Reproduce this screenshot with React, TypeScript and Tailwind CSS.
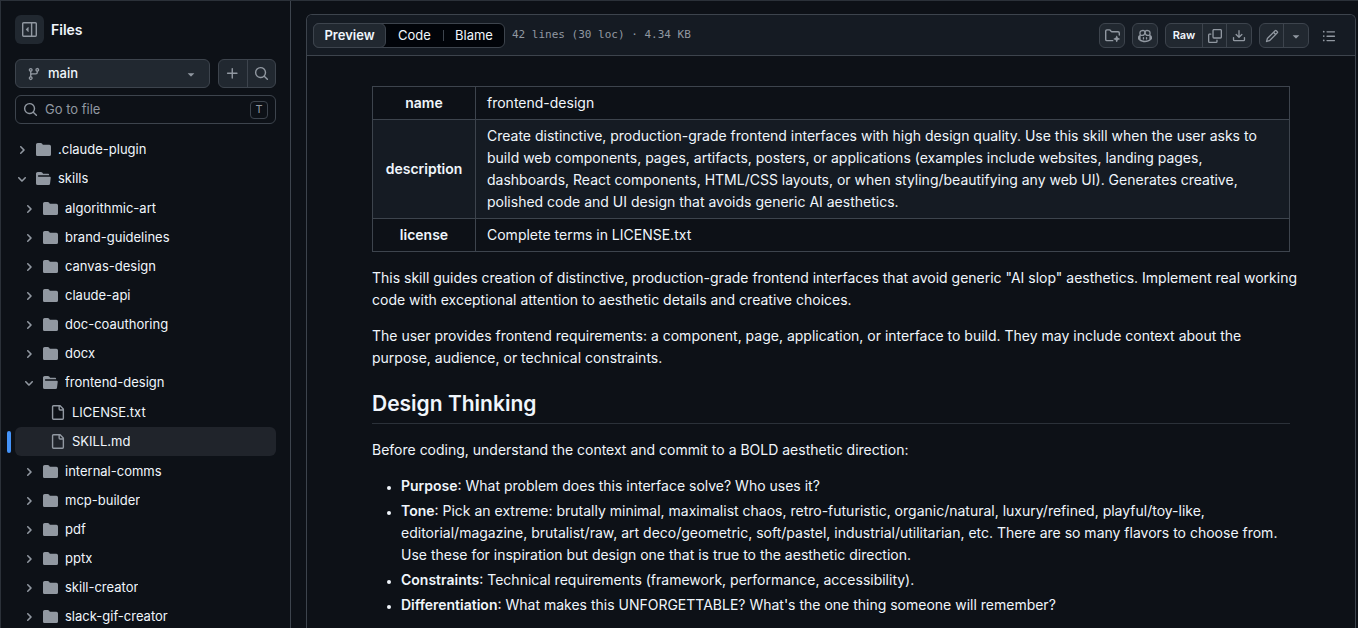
import type { ReactNode } from "react";

const ICONS = {
  chevronRight: [
    "M4.7 10c-.2 0-.4-.1-.5-.2-.3-.3-.3-.8 0-1.1L6.9 6 4.2 3.3c-.3-.3-.3-.8 0-1.1.3-.3.8-.3 1.1 0l3.3 3.2c.3.3.3.8 0 1.1L5.3 9.7c-.2.2-.4.3-.6.3Z",
  ],
  chevronDown: [
    "M6 8.825c-.2 0-.4-.1-.5-.2l-3.3-3.3c-.3-.3-.3-.8 0-1.1.3-.3.8-.3 1.1 0l2.7 2.7 2.7-2.7c.3-.3.8-.3 1.1 0 .3.3.3.8 0 1.1l-3.2 3.2c-.2.2-.4.3-.6.3Z",
  ],
  folder: [
    "M1.75 1A1.75 1.75 0 0 0 0 2.75v10.5C0 14.216.784 15 1.75 15h12.5A1.75 1.75 0 0 0 16 13.25v-8.5A1.75 1.75 0 0 0 14.25 3H7.5a.25.25 0 0 1-.2-.1l-.9-1.2C6.07 1.26 5.55 1 5 1H1.75Z",
  ],
  folderOpen: [
    "M.513 1.513A1.75 1.75 0 0 1 1.75 1h3.5c.55 0 1.07.26 1.4.7l.9 1.2a.25.25 0 0 0 .2.1H13a1 1 0 0 1 1 1v.5H2.75a.75.75 0 0 0 0 1.5h11.978a1 1 0 0 1 .994 1.117L15 13.25A1.75 1.75 0 0 1 13.25 15H1.75A1.75 1.75 0 0 1 0 13.25V2.75c0-.464.184-.91.513-1.237Z",
  ],
  file: [
    "M2 1.75C2 .784 2.784 0 3.75 0h6.586c.464 0 .909.184 1.237.513l2.914 2.914c.329.328.513.773.513 1.237v9.586A1.75 1.75 0 0 1 13.25 16h-9.5A1.75 1.75 0 0 1 2 14.25Zm1.75-.25a.25.25 0 0 0-.25.25v12.5c0 .138.112.25.25.25h9.5a.25.25 0 0 0 .25-.25V6h-2.75A1.75 1.75 0 0 1 9 4.25V1.5Zm6.75.062V4.25c0 .138.112.25.25.25h2.688l-.011-.013-2.914-2.914-.013-.011Z",
  ],
  search: [
    "M10.68 11.74a6 6 0 0 1-7.922-8.982 6 6 0 0 1 8.982 7.922l3.04 3.04a.749.749 0 0 1-.326 1.275.749.749 0 0 1-.734-.215ZM11.5 7a4.499 4.499 0 1 0-8.997 0A4.499 4.499 0 0 0 11.5 7Z",
  ],
  branch: [
    "M9.5 3.25a2.25 2.25 0 1 1 3 2.122V6A2.5 2.5 0 0 1 10 8.5H6a1 1 0 0 0-1 1v1.128a2.251 2.251 0 1 1-1.5 0V5.372a2.25 2.25 0 1 1 1.5 0v1.836A2.493 2.493 0 0 1 6 7h4a1 1 0 0 0 1-1v-.628A2.25 2.25 0 0 1 9.5 3.25Zm-6 0a.75.75 0 1 0 1.5 0 .75.75 0 0 0-1.5 0Zm8.25-.75a.75.75 0 1 0 0 1.5.75.75 0 0 0 0-1.5ZM4.25 12a.75.75 0 1 0 0 1.5.75.75 0 0 0 0-1.5Z",
  ],
  plus: [
    "M7.75 2a.75.75 0 0 1 .75.75V7h4.25a.75.75 0 0 1 0 1.5H8.5v4.25a.75.75 0 0 1-1.5 0V8.5H2.75a.75.75 0 0 1 0-1.5H7V2.75A.75.75 0 0 1 7.75 2Z",
  ],
  triangle: [
    "m4.427 7.427 3.396 3.396a.25.25 0 0 0 .354 0l3.396-3.396A.25.25 0 0 0 11.396 7H4.604a.25.25 0 0 0-.177.427Z",
  ],
  sidebar: [
    "m4.177 7.823 2.396-2.396A.25.25 0 0 1 7 5.604v4.792a.25.25 0 0 1-.427.177L4.177 8.177a.25.25 0 0 1 0-.354Z",
    "M0 1.75C0 .784.784 0 1.75 0h12.5C15.216 0 16 .784 16 1.75v12.5A1.75 1.75 0 0 1 14.25 16H1.75A1.75 1.75 0 0 1 0 14.25Zm1.75-.25a.25.25 0 0 0-.25.25v12.5c0 .138.112.25.25.25H9.5v-13Zm12.5 13a.25.25 0 0 0 .25-.25V1.75a.25.25 0 0 0-.25-.25H11v13Z",
  ],
  copy: [
    "M0 6.75C0 5.784.784 5 1.75 5h1.5a.75.75 0 0 1 0 1.5h-1.5a.25.25 0 0 0-.25.25v7.5c0 .138.112.25.25.25h7.5a.25.25 0 0 0 .25-.25v-1.5a.75.75 0 0 1 1.5 0v1.5A1.75 1.75 0 0 1 9.25 16h-7.5A1.75 1.75 0 0 1 0 14.25Z",
    "M5 1.75C5 .784 5.784 0 6.75 0h7.5C15.216 0 16 .784 16 1.75v7.5A1.75 1.75 0 0 1 14.25 11h-7.5A1.75 1.75 0 0 1 5 9.25Zm1.75-.25a.25.25 0 0 0-.25.25v7.5c0 .138.112.25.25.25h7.5a.25.25 0 0 0 .25-.25v-7.5a.25.25 0 0 0-.25-.25Z",
  ],
  download: [
    "M2.75 14A1.75 1.75 0 0 1 1 12.25v-2.5a.75.75 0 0 1 1.5 0v2.5c0 .138.112.25.25.25h10.5a.25.25 0 0 0 .25-.25v-2.5a.75.75 0 0 1 1.5 0v2.5A1.75 1.75 0 0 1 13.25 14Z",
    "M7.25 7.689V2a.75.75 0 0 1 1.5 0v5.689l1.97-1.969a.749.749 0 1 1 1.06 1.06l-3.25 3.25a.749.749 0 0 1-1.06 0L4.22 6.78a.749.749 0 1 1 1.06-1.06l1.97 1.969Z",
  ],
  pencil: [
    "M11.013 1.427a1.75 1.75 0 0 1 2.474 0l1.086 1.086a1.75 1.75 0 0 1 0 2.474l-8.61 8.61c-.21.21-.47.364-.756.445l-3.251.93a.75.75 0 0 1-.927-.928l.929-3.25c.081-.286.235-.547.445-.758l8.61-8.61Zm.176 4.823L9.75 4.81l-6.286 6.287a.253.253 0 0 0-.064.108l-.558 1.953 1.953-.558a.253.253 0 0 0 .108-.064Zm1.238-3.763a.25.25 0 0 0-.354 0L10.811 3.75l1.439 1.44 1.263-1.263a.25.25 0 0 0 0-.354Z",
  ],
  list: [
    "M5.75 2.5h8.5a.75.75 0 0 1 0 1.5h-8.5a.75.75 0 0 1 0-1.5Zm0 5h8.5a.75.75 0 0 1 0 1.5h-8.5a.75.75 0 0 1 0-1.5Zm0 5h8.5a.75.75 0 0 1 0 1.5h-8.5a.75.75 0 0 1 0-1.5ZM2 14a1 1 0 1 1 0-2 1 1 0 0 1 0 2Zm1-6a1 1 0 1 1-2 0 1 1 0 0 1 2 0ZM2 4a1 1 0 1 1 0-2 1 1 0 0 1 0 2Z",
  ],
  copilot: [
    "M7.998 15.035c-4.562 0-7.873-2.914-7.998-3.749V9.338c.085-.628.677-1.686 1.588-2.065.013-.07.024-.143.036-.218.029-.183.06-.384.126-.612-.201-.508-.254-1.084-.254-1.656 0-.87.128-1.769.693-2.484.579-.733 1.494-1.124 2.724-1.261 1.206-.134 2.262.034 2.944.765.05.053.096.108.139.165.044-.057.094-.112.143-.165.682-.731 1.738-.899 2.944-.765 1.23.137 2.145.528 2.724 1.261.566.715.693 1.614.693 2.484 0 .572-.053 1.148-.254 1.656.066.228.098.429.126.612.012.076.024.148.037.218.924.385 1.522 1.471 1.591 2.095v1.872c0 .766-3.351 3.795-8.002 3.795Zm0-1.485c2.28 0 4.584-1.11 5.002-1.433V7.862l-.023-.116c-.49.21-1.075.291-1.727.291-1.146 0-2.059-.327-2.71-.991A3.222 3.222 0 0 1 8 6.303a3.24 3.24 0 0 1-.544.743c-.65.664-1.563.991-2.71.991-.652 0-1.236-.081-1.727-.291l-.023.116v4.255c.419.323 2.722 1.433 5.002 1.433ZM6.762 2.83c-.193-.206-.637-.413-1.682-.297-1.019.113-1.479.404-1.713.7-.247.312-.369.789-.369 1.554 0 .793.129 1.171.308 1.371.162.181.519.379 1.442.379.853 0 1.339-.235 1.638-.54.315-.322.527-.827.617-1.553.117-.935-.037-1.395-.241-1.614Zm4.155-.297c-1.044-.116-1.488.091-1.681.297-.204.219-.359.679-.242 1.614.091.726.303 1.231.618 1.553.299.305.784.54 1.638.54.922 0 1.28-.198 1.442-.379.179-.2.308-.578.308-1.371 0-.765-.123-1.242-.37-1.554-.233-.296-.693-.587-1.713-.7Z",
    "M6.25 9.037a.75.75 0 0 1 .75.75v1.501a.75.75 0 0 1-1.5 0V9.787a.75.75 0 0 1 .75-.75Zm4.25.75v1.501a.75.75 0 0 1-1.5 0V9.787a.75.75 0 0 1 1.5 0Z",
  ],
};

type IconName = keyof typeof ICONS;

function Icon({ name, className = "size-3.5" }: { name: IconName; className?: string }) {
  const box = name === "chevronRight" || name === "chevronDown" ? "0 0 12 12" : "0 0 16 16";
  return (
    <svg viewBox={box} fill="currentColor" aria-hidden="true" className={`shrink-0 ${className}`}>
      {ICONS[name].map((d) => (
        <path key={d} d={d} />
      ))}
    </svg>
  );
}

function FolderSparkleIcon() {
  return (
    <svg viewBox="0 0 16 16" aria-hidden="true" className="size-[15px] shrink-0">
      <path
        d="M8.250 13.500H2a1.250 1.250 0 0 1-1.250-1.250v-9A1.250 1.250 0 0 1 2 2h2.800a1 1 0 0 1 .8.4l.9 1.2a1 1 0 0 0 .8.4H14a1.250 1.250 0 0 1 1.250 1.250V7.500"
        fill="none"
        stroke="currentColor"
        strokeWidth="1.500"
        strokeLinecap="round"
      />
      <path
        d="M12.500 8.300c.25 0 .45.150.53.390l.4 1.170c.14.400.45.710.85.850l1.170.4c.52.180.52.880 0 1.060l-1.170.4c-.4.140-.71.450-.85.850l-.4 1.170c-.18.520-.88.520-1.060 0l-.4-1.170a1.350 1.350 0 0 0-.85-.85l-1.170-.4c-.52-.18-.52-.88 0-1.060l1.170-.4c.4-.14.71-.45.85-.85l.4-1.170c.08-.24.28-.39.53-.39Z"
        fill="currentColor"
      />
    </svg>
  );
}

type Node = { name: string; kind: "folder" | "file"; selected?: boolean; children?: Node[] };

const folder = (name: string, children?: Node[]): Node => ({ name, kind: "folder", children });

const TREE: Node[] = [
  folder(".claude-plugin"),
  folder("skills", [
    folder("algorithmic-art"),
    folder("brand-guidelines"),
    folder("canvas-design"),
    folder("claude-api"),
    folder("doc-coauthoring"),
    folder("docx"),
    folder("frontend-design", [
      { name: "LICENSE.txt", kind: "file" },
      { name: "SKILL.md", kind: "file", selected: true },
    ]),
    folder("internal-comms"),
    folder("mcp-builder"),
    folder("pdf"),
    folder("pptx"),
    folder("skill-creator"),
    folder("slack-gif-creator"),
  ]),
];

const INDENT = ["pl-0", "pl-[7px]", "pl-3.5"];
const GROUP_SPACE = ["", "pt-px", "py-px"];

function Tree({ nodes, level = 0 }: { nodes: Node[]; level?: number }) {
  return (
    <ul className={GROUP_SPACE[level]}>
      {nodes.map((node) => (
        <li key={node.name}>
          <div className="relative">
            {node.selected && (
              <span className="absolute top-1 -left-2 h-[22px] w-1 rounded-full bg-[#4493f8]" />
            )}
            <button
              type="button"
              className={`flex h-[29px] w-full items-center rounded-md text-left ${INDENT[level]} ${
                node.selected ? "bg-[#20242b]" : ""
              }`}
            >
              <span className="flex w-[21px] shrink-0 items-center pl-px text-[#9198a1]">
                {node.kind === "folder" && (
                  <Icon name={node.children ? "chevronDown" : "chevronRight"} className="size-3" />
                )}
              </span>
              <span className="flex w-[22px] shrink-0 text-[#9198a1]">
                {node.kind === "file" ? (
                  <Icon name="file" className="size-[15px]" />
                ) : (
                  <Icon name={node.children ? "folderOpen" : "folder"} className="size-[15px]" />
                )}
              </span>
              <span className="truncate">{node.name}</span>
            </button>
          </div>
          {node.children && <Tree nodes={node.children} level={level + 1} />}
        </li>
      ))}
    </ul>
  );
}

function Sidebar() {
  return (
    <aside className="w-[290px] shrink-0 overflow-hidden border-r border-[#3d444d] px-3.5 pt-3.5 text-[13px]">
      <div className="flex items-center gap-[7px]">
        <button
          type="button"
          aria-label="Collapse file tree"
          className="flex size-[29px] items-center justify-center rounded-md bg-[#212830] text-[#9198a1]"
        >
          <Icon name="sidebar" className="size-[15px]" />
        </button>
        <h2 className="text-sm font-semibold">Files</h2>
      </div>

      <div className="mt-[15px] flex gap-2">
        <button
          type="button"
          className="flex h-[29px] flex-1 items-center rounded-md border border-[#3d444d] bg-[#212830] px-[11px] font-medium"
        >
          <Icon name="branch" className="mr-[7px] size-3.5 text-[#9198a1]" />
          main
          <Icon name="triangle" className="ml-auto size-3.5 text-[#9198a1]" />
        </button>
        <div className="flex h-[29px] w-[58px] divide-x divide-[#3d444d] rounded-md border border-[#3d444d] bg-[#212830] text-[#9198a1]">
          <button type="button" aria-label="Add file" className="flex flex-1 items-center justify-center">
            <Icon name="plus" className="size-[15px]" />
          </button>
          <button type="button" aria-label="Search this repository" className="flex flex-1 items-center justify-center">
            <Icon name="search" className="size-[15px]" />
          </button>
        </div>
      </div>

      <label className="mt-[7px] flex h-[29px] items-center rounded-md border border-[#3d444d] px-[7px] text-[#9198a1]">
        <Icon name="search" className="size-[15px]" />
        <input
          type="text"
          aria-label="Go to file"
          placeholder="Go to file"
          className="ml-[7px] min-w-0 flex-1 bg-transparent outline-none placeholder:text-[#9198a1]"
        />
        <kbd className="flex size-[18px] items-center justify-center rounded-sm border border-[#3d444d] font-['Inter',sans-serif] text-[11px]">
          T
        </kbd>
      </label>

      <nav aria-label="File tree" className="mt-[11px]">
        <Tree nodes={TREE} />
      </nav>
    </aside>
  );
}

function ToolButton({ label, className, children }: { label: string; className: string; children: ReactNode }) {
  return (
    <button type="button" aria-label={label} className={`flex items-center justify-center ${className}`}>
      {children}
    </button>
  );
}

function Toolbar() {
  return (
    <header className="flex items-center border-b border-[#3d444d] bg-[#151b23] pt-2 pr-3.5 pb-[7px] pl-1.5">
      <div className="flex h-[25px] rounded-md border border-[#3d444d] bg-[#010409] text-[13px]">
        <button
          type="button"
          className="-my-px -ml-px w-[73px] rounded-md border border-[#3d444d] bg-[#212830] font-semibold"
        >
          Preview
        </button>
        <button type="button" className="w-[57px]">
          Code
        </button>
        <span className="my-1.5 w-px bg-[#3d444d]" />
        <button type="button" className="w-[60px]">
          Blame
        </button>
      </div>
      <p className="ml-[7px] font-['DejaVu_Sans_Mono',monospace] text-[11px] text-[#9198a1]">
        42 lines (30 loc) · 4.34 KB
      </p>

      <div className="ml-auto flex h-[25px] items-stretch gap-[7px] text-[#9198a1]">
        <div className="flex rounded-md border border-[#3d444d] bg-[#212830]">
          <ToolButton label="Add to space" className="w-6">
            <FolderSparkleIcon />
          </ToolButton>
        </div>
        <div className="flex rounded-md border border-[#3d444d] bg-[#212830]">
          <ToolButton label="Ask Copilot" className="w-6">
            <Icon name="copilot" />
          </ToolButton>
        </div>
        <div className="flex divide-x divide-[#3d444d] rounded-md border border-[#3d444d] bg-[#212830]">
          <button type="button" className="w-[37px] text-[11px] font-semibold text-[#f0f6fc]">
            Raw
          </button>
          <ToolButton label="Copy raw file" className="w-6">
            <Icon name="copy" />
          </ToolButton>
          <ToolButton label="Download raw file" className="w-6">
            <Icon name="download" />
          </ToolButton>
        </div>
        <div className="flex divide-x divide-[#3d444d] rounded-md border border-[#3d444d] bg-[#212830]">
          <ToolButton label="Edit this file" className="w-6">
            <Icon name="pencil" />
          </ToolButton>
          <ToolButton label="More edit options" className="w-6">
            <Icon name="triangle" />
          </ToolButton>
        </div>
        <ToolButton label="Outline" className="w-[25px]">
          <Icon name="list" />
        </ToolButton>
      </div>
    </header>
  );
}

const META = [
  { key: "name", value: "frontend-design" },
  {
    key: "description",
    value:
      "Create distinctive, production-grade frontend interfaces with high design quality. Use this skill when the user asks to build web components, pages, artifacts, posters, or applications (examples include websites, landing pages, dashboards, React components, HTML/CSS layouts, or when styling/beautifying any web UI). Generates creative, polished code and UI design that avoids generic AI aesthetics.",
  },
  { key: "license", value: "Complete terms in LICENSE.txt" },
];

const POINTS = [
  { term: "Purpose", text: "What problem does this interface solve? Who uses it?" },
  {
    term: "Tone",
    text: "Pick an extreme: brutally minimal, maximalist chaos, retro-futuristic, organic/natural, luxury/refined, playful/toy-like, editorial/magazine, brutalist/raw, art deco/geometric, soft/pastel, industrial/utilitarian, etc. There are so many flavors to choose from. Use these for inspiration but design one that is true to the aesthetic direction.",
  },
  { term: "Constraints", text: "Technical requirements (framework, performance, accessibility)." },
  {
    term: "Differentiation",
    text: "What makes this UNFORGETTABLE? What's the one thing someone will remember?",
  },
];

function Readme() {
  return (
    <article className="px-[65px] pt-[30px] pb-8 text-sm leading-[22px]">
      <table className="w-full border-collapse">
        <tbody>
          {META.map(({ key, value }) => (
            <tr key={key} className="even:bg-[#151b23]">
              <th scope="row" className="w-[103px] border border-[#3d444d] py-[5px] font-semibold">
                {key}
              </th>
              <td className="border border-[#3d444d] px-[11px] py-[5px]">{value}</td>
            </tr>
          ))}
        </tbody>
      </table>
      <p className="mt-[15px] -mr-3">
        This skill guides creation of distinctive, production-grade frontend interfaces that avoid generic "AI slop"
        aesthetics. Implement real working code with exceptional attention to aesthetic details and creative choices.
      </p>
      <p className="mt-3.5 -mr-3">
        The user provides frontend requirements: a component, page, application, or interface to build. They may include
        context about the purpose, audience, or technical constraints.
      </p>
      <h2 className="mt-[22px] border-b border-[#2b3139] pb-1.5 text-[21px] leading-[26px] font-semibold">
        Design Thinking
      </h2>
      <p className="mt-[15px]">Before coding, understand the context and commit to a BOLD aesthetic direction:</p>
      <ul className="mt-3.5 list-disc space-y-[3px] pl-[29px] marker:text-[11px]">
        {POINTS.map(({ term, text }) => (
          <li key={term}>
            <strong className="font-semibold">{term}</strong>: {text}
          </li>
        ))}
      </ul>
    </article>
  );
}

export default function App() {
  return (
    <div className="flex h-screen overflow-hidden border-t border-l border-[#2b3139] bg-[#0d1117] font-['Inter','Liberation_Sans',sans-serif] text-[#f0f6fc]">
      <Sidebar />
      <main className="flex min-w-0 flex-1 flex-col pt-[13px] pr-0.5 pl-[15px]">
        <section className="flex-1 overflow-hidden rounded-t-md border border-b-0 border-[#3d444d]">
          <Toolbar />
          <Readme />
        </section>
      </main>
    </div>
  );
}
